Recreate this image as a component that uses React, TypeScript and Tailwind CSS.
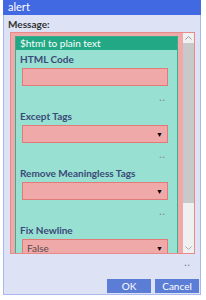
import React from "react";

function Field({ label, select, value }: { label: string; select?: boolean; value?: string }) {
  return (
    <div className="flex flex-col pb-[6px]">
      <div className="h-[14px] text-[10px] font-bold leading-[14px] text-[#3b4a78]">{label}</div>
      <div className="mt-[2px] ml-[2px] flex h-[18px] w-[146px] items-center justify-between border border-[#e27a78] bg-[#f0a9a9] px-[4px]">
        <span className="text-[10px] text-[#5a4a4a]">{value ?? ""}</span>
        {select && <span className="text-[7px] leading-none text-black">▼</span>}
      </div>
      <div className="mt-[5px] flex h-[12px] w-[150px] justify-end pr-[4px] text-[10px] font-bold leading-[12px] tracking-[1px] text-[#8a8a8a]">..</div>
    </div>
  );
}

export default function App() {
  return (
    <div className="h-[300px] w-[206px] bg-white font-['Lato',sans-serif]">
      <div className="ml-[3px] flex h-[295px] w-[198px] flex-col border border-[#a9b9f0] bg-[#dde3f5]">
        {/* title bar */}
        <div className="-mx-px -mt-px flex h-[15px] items-center bg-[#4169e1] px-[5px] text-[11px] text-white">alert</div>

        <div className="mt-[2px] px-[4px] text-[10px] font-bold leading-[14px] text-[#333]">Message:</div>

        {/* scroll box */}
        <div className="ml-[6px] mt-[1px] flex h-[222px] w-[185px] overflow-hidden border border-[#e88a8a] bg-[#f0a9a9]">
          <div className="flex-1 overflow-hidden pl-[4px] pt-[3px] pr-[5px]">
            <div className="border border-[#3aae8e] bg-[#98e0d2]">
              <div className="flex h-[13px] items-center bg-[#22a884] px-[4px] text-[10px] text-white">$html to plain text</div>
              <div className="px-[4px] pt-[2px]">
                <Field label="HTML Code" />
                <Field label="Except Tags" select />
                <Field label="Remove Meaningless Tags" select />
                <Field label="Fix Newline" select value="False" />
              </div>
            </div>
          </div>
          {/* scrollbar */}
          <div className="flex w-[11px] flex-col bg-[#f0f0f0]">
            <div className="flex h-[10px] items-center justify-center">
              <svg width="7" height="4" viewBox="0 0 7 4"><path d="M0.5 3.5 L3.5 0.5 L6.5 3.5" fill="none" stroke="#999" /></svg>
            </div>
            <div className="h-[160px] bg-[#c9c9c9]" />
            <div className="flex-1" />
            <div className="flex h-[10px] items-center justify-center">
              <svg width="7" height="4" viewBox="0 0 7 4"><path d="M0.5 0.5 L3.5 3.5 L6.5 0.5" fill="none" stroke="#aaa" /></svg>
            </div>
          </div>
        </div>

        <div className="mt-[2px] flex h-[12px] justify-end pr-[9px] text-[10px] font-bold leading-[12px] tracking-[1px] text-[#8a8a8a]">..</div>

        <div className="mt-[11px] flex justify-end gap-[4px] pr-[1px]">
          <button className="h-[14px] w-[44px] bg-[#5b7dd6] text-[10px] leading-[14px] text-white">OK</button>
          <button className="h-[14px] w-[44px] bg-[#5b7dd6] text-[10px] leading-[14px] text-white">Cancel</button>
        </div>
      </div>
    </div>
  );
}
